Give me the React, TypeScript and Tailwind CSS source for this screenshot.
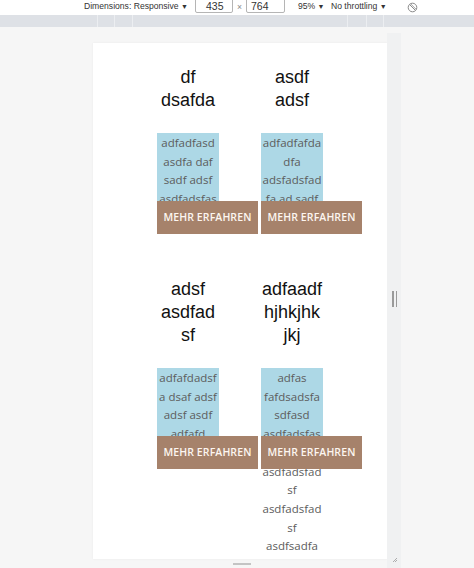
import React from "react";

interface Card {
  title: string;
  body: string;
}

const CARDS: Card[] = [
  { title: "df dsafda", body: "adfadfasd asdfa daf sadf adsf asdfadsfas df" },
  { title: "asdf adsf", body: "adfadfafda dfa adsfadsfad fa ad sadf asdf asd fa" },
  { title: "adsf asdfad sf", body: "adfafdadsf a dsaf adsf adsf asdf adfafd" },
  {
    title: "adfaadf hjhkjhk jkj",
    body: "adfas fafdsadsfa sdfasd asdfadsfas asdf asdfadsfad sf asdfadsfad sf asdfsadfa sf asdfadsfad",
  },
];

function Toolbar() {
  return (
    <div className="relative h-[15px] bg-white font-['Liberation_Sans',Arial,sans-serif] text-[8.6px] leading-[13px] text-[#333]">
      <span className="absolute left-[84px] top-[0px]">
        Dimensions: Responsive <span className="text-[7px]">▼</span>
      </span>
      <span className="absolute left-[195px] top-[-3px] h-[16px] w-[38px] rounded-[2px] border border-[#b5b5b5] bg-white pl-[10px] pt-[2px] text-[10.5px]">
        435
      </span>
      <span className="absolute left-[237px] top-[1px] text-[#888]">×</span>
      <span className="absolute left-[246px] top-[-3px] h-[16px] w-[39px] rounded-[2px] border border-[#b5b5b5] bg-white pl-[4px] pt-[2px] text-[10.5px]">
        764
      </span>
      <span className="absolute left-[298px] top-[0px]">
        95% <span className="text-[7px]">▼</span>
      </span>
      <span className="absolute left-[331px] top-[0px]">
        No throttling <span className="text-[7px]">▼</span>
      </span>
      <svg className="absolute left-[407px] top-[2px]" width="11" height="11" viewBox="0 0 11 11" fill="none">
        <circle cx="5.5" cy="5.5" r="4.3" stroke="#8a8a8a" strokeWidth="1" />
        <path d="M2.6 2.6 L8.4 8.4" stroke="#8a8a8a" strokeWidth="1" />
        <path d="M3.6 1.8 L9.2 7.4" stroke="#8a8a8a" strokeWidth="0.8" />
      </svg>
    </div>
  );
}

function RulerBar() {
  return (
    <div className="flex h-[12px] bg-[#dee1e6]">
      <div className="w-[97px]" />
      <div className="w-[17px] border-l border-[#eceef1]" />
      <div className="w-[18px] border-l border-[#eceef1]" />
      <div className="w-[215px] border-l border-[#eceef1]" />
      <div className="w-[19px] border-l border-[#eceef1]" />
      <div className="w-[17px] border-l border-[#eceef1]" />
      <div className="flex-1 border-l border-[#eceef1]" />
    </div>
  );
}

function Teaser({ card }: { card: Card }) {
  return (
    <div className="flex w-[62px] flex-col items-start">
      <h2 className="w-full text-center font-['Liberation_Sans',Arial,sans-serif] text-[18px] leading-[23px] text-[#111]">
        {card.title}
      </h2>
      <div className="mt-[21px] h-[68px] w-[62px] bg-[#add8e6] pt-[1px] text-center font-['Open_Sans',sans-serif] text-[11.5px] leading-[18.7px] text-[#5c5c5c]">
        {card.body}
      </div>
      <button className="relative h-[33px] w-[101px] shrink-0 bg-[#a6826b] font-['Open_Sans',sans-serif] text-[10.5px] font-semibold tracking-[0.1px] text-[#fdf6f0]">
        MEHR ERFAHREN
      </button>
    </div>
  );
}

export default function App() {
  return (
    <div className="h-[568px] w-[474px] overflow-hidden bg-[#f6f6f6]">
      <Toolbar />
      <RulerBar />
      <div className="flex items-start">
        <div className="w-[93px] shrink-0" />
        <div className="flex w-[294px] shrink-0 flex-col">
          <div className="mt-[16px] h-[516px] overflow-hidden bg-white pt-[23px] shadow-[0_0_2px_rgba(0,0,0,0.06)]">
            <div className="grid grid-cols-[62px_62px] justify-center gap-x-[42px] gap-y-[44px]">
              {CARDS.map((c, i) => (
                <Teaser key={i} card={c} />
              ))}
            </div>
          </div>
          <div className="flex h-[9px] justify-center pt-[4px]">
            <div className="ml-[4px] h-[2px] w-[18px] bg-[#c4c4c4]" />
          </div>
        </div>
        <div className="relative mt-[6px] h-[535px] w-[14px] shrink-0 bg-[#f0f1f2]">
          <div className="absolute left-[5px] top-[258px] flex gap-[2px]">
            <div className="h-[16px] w-[1.5px] bg-[#9a9a9a]" />
            <div className="h-[16px] w-[1.5px] bg-[#9a9a9a]" />
          </div>
          <svg className="absolute left-[5px] top-[524px]" width="6" height="6" viewBox="0 0 6 6">
            <path d="M1 5 L5 1 M3 5 L5 3" stroke="#9a9a9a" strokeWidth="0.8" />
          </svg>
        </div>
      </div>
    </div>
  );
}
